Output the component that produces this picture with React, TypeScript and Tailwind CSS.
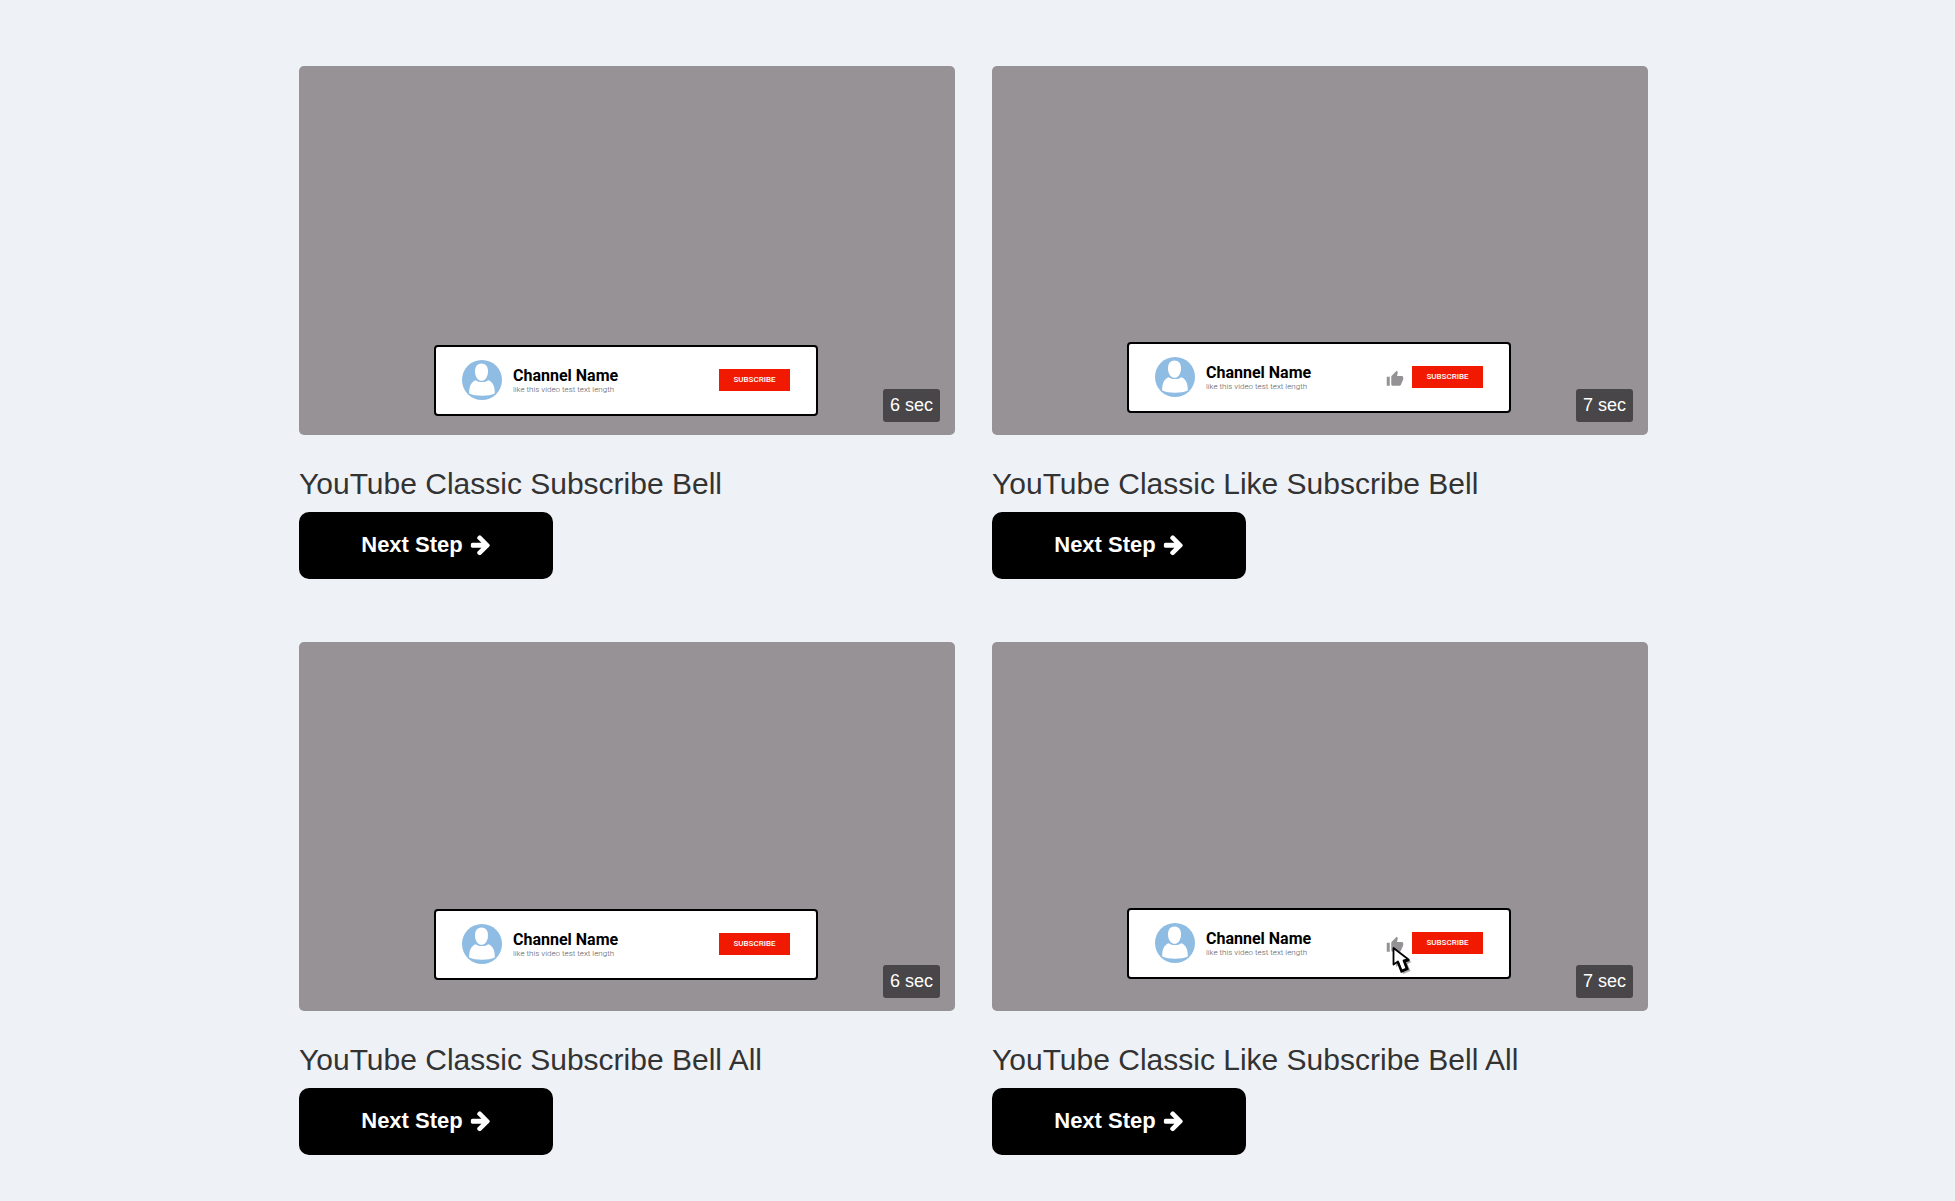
import React from "react";
import { MdThumbUp } from "react-icons/md";

type Template = {
  title: string;
  duration: string;
  like?: boolean;
  cursor?: boolean;
  offset: string;
};

const templates: Template[] = [
  { title: "YouTube Classic Subscribe Bell", duration: "6 sec", offset: "pb-[19px]" },
  { title: "YouTube Classic Like Subscribe Bell", duration: "7 sec", like: true, offset: "pb-[22px]" },
  { title: "YouTube Classic Subscribe Bell All", duration: "6 sec", offset: "pb-[31px]" },
  { title: "YouTube Classic Like Subscribe Bell All", duration: "7 sec", like: true, cursor: true, offset: "pb-8" },
];

function ArrowRight() {
  return (
    <svg viewBox="0 0 1792 1792" className="size-[23px]" fill="currentColor" aria-hidden="true">
      <path d="M1696 960q0 54-37 91l-651 651q-39 37-91 37-51 0-90-37l-75-75q-38-38-38-91t38-91l293-293h-704q-52 0-84.500-37.500t-32.500-90.500v-128q0-53 32.500-90.500t84.500-37.500h704l-293-294q-38-36-38-90t38-90l75-75q38-38 90-38 53 0 91 38l651 651q37 35 37 90z" />
    </svg>
  );
}

function Avatar() {
  return (
    <svg viewBox="0 0 40 40" className="size-10 shrink-0" aria-hidden="true">
      <circle cx="20" cy="20" r="20" fill="#8fbce2" />
      <path
        d="M7.2 33.500C7 26.500 9 22.200 13.500 20.200C15.500 21.500 17.500 22 20 22C22.500 22 24.500 21.500 26.500 20.200C31 22.200 33 26.500 32.800 33.500C29.500 35 25 35.700 20 35.700C15 35.700 10.500 35 7.200 33.500Z"
        fill="#fff"
      />
      <ellipse cx="19.500" cy="12.500" rx="7.400" ry="9.200" fill="#8fbce2" />
      <path
        d="M19.500 3.500C23.500 3.500 26 6.600 26 11.200C26 16.500 23.300 20.800 19.500 20.800C15.700 20.800 13 16.500 13 11.200C13 6.600 15.500 3.500 19.500 3.500Z"
        fill="#fff"
      />
    </svg>
  );
}

function Cursor() {
  return (
    <svg viewBox="0 0 20 28" className="absolute top-[10px] left-[6px] h-7 w-5" aria-hidden="true">
      <path d="M4 6L4 21L7 19L11 28L18.500 25L15.500 18L19.500 16Z" fill="#555" opacity=".5" />
      <path
        d="M1.500 2L1.500 18.500L6 15.500L9.500 24.500L14.500 22.500L11.500 14.500L16.500 13.500Z"
        fill="#fff"
        stroke="#000"
        strokeWidth="1.800"
        strokeLinejoin="round"
      />
      <path d="M6 16.500L9.500 25.500L15.500 23L12.500 15.500L17.500 14" fill="none" stroke="#000" strokeWidth="2.200" />
    </svg>
  );
}

function Banner({ like, cursor }: { like?: boolean; cursor?: boolean }) {
  return (
    <div className="flex h-[71px] w-[384px] items-center rounded-[4px] border-2 border-black bg-white px-[26px] pb-[2px] font-['Roboto',sans-serif]">
      <Avatar />
      <div className="ml-[11px] flex-1 pt-1">
        <div className="text-[16px] leading-4 font-bold text-black">Channel Name</div>
        <div className="text-[8px] leading-3 font-light text-[#55555a]">like this video test text length</div>
      </div>
      {like && (
        <div className="relative mt-1 mr-2 text-[#949295]">
          <MdThumbUp size={18} />
          {cursor && <Cursor />}
        </div>
      )}
      <button type="button" className="flex h-[22px] w-[71px] items-center justify-center bg-[#f11a00] text-[8px] font-medium text-white">
        SUBSCRIBE
      </button>
    </div>
  );
}

function Card({ title, duration, like, cursor, offset }: Template) {
  return (
    <article>
      <div className={`relative flex aspect-video items-end justify-center rounded-[5px] bg-[#979295] pr-[2px] ${offset}`}>
        <Banner like={like} cursor={cursor} />
        <span className="absolute right-[15px] bottom-[13px] rounded-[3px] bg-[#484648] px-[7px] text-[18px] leading-[33px] text-white">
          {duration}
        </span>
      </div>
      <h3 className="mt-8 text-[30px] leading-[33px] text-[#333]">{title}</h3>
      <button
        type="button"
        className="mt-3 flex h-[67px] w-[254px] items-center justify-center gap-[5px] rounded-[10px] bg-black pb-[2px] text-[22px] font-bold text-white"
      >
        Next Step
        <ArrowRight />
      </button>
    </article>
  );
}

export default function App() {
  return (
    <main className="min-h-screen bg-[#eef2f7] pt-[66px] pr-2 pb-11 font-['Liberation_Sans',Arial,sans-serif]">
      <div className="mx-auto grid max-w-[1349px] grid-cols-2 gap-x-[37px] gap-y-[63px]">
        {templates.map((template) => (
          <Card key={template.title} {...template} />
        ))}
      </div>
    </main>
  );
}
